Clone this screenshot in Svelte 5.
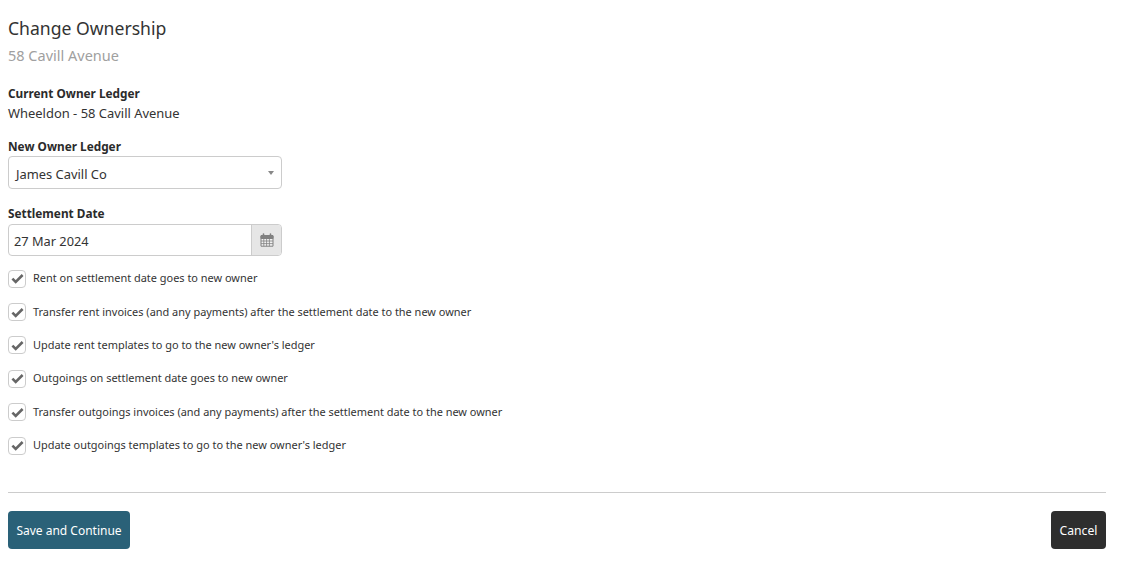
<script>
  const checks = [
    'Rent on settlement date goes to new owner',
    'Transfer rent invoices (and any payments) after the settlement date to the new owner',
    "Update rent templates to go to the new owner's ledger",
    'Outgoings on settlement date goes to new owner',
    'Transfer outgoings invoices (and any payments) after the settlement date to the new owner',
    "Update outgoings templates to go to the new owner's ledger"
  ];
</script>

<main class="page">
  <h1>Change Ownership</h1>
  <h2>58 Cavill Avenue</h2>

  <section class="info">
    <div class="label">Current Owner Ledger</div>
    <div class="value">Wheeldon - 58 Cavill Avenue</div>
  </section>

  <section class="newowner">
    <div class="label">New Owner Ledger</div>
    <div class="select"><span>James Cavill Co</span><i class="caret"></i></div>
  </section>

  <section class="settle">
    <div class="label">Settlement Date</div>
    <div class="date">
      <span class="dateval">27 Mar 2024</span>
      <span class="addon">
        <svg width="14" height="14" viewBox="0 0 14 14" fill="none" stroke="#808080" stroke-width="1">
          <path d="M1 3h12v10.2H1z" fill="#f2f2f2"/>
          <path d="M1 2.5h12v3H1z" fill="#808080"/>
          <path d="M1 8h12M1 10.6h12M3.8 5.5v7.7M6.6 5.5v7.7M9.4 5.5v7.7" stroke-width=".8"/>
          <path d="M3.5 1v2.6M10.5 1v2.6" stroke-width="1.6" stroke-linecap="round"/>
        </svg>
      </span>
    </div>
  </section>

  <section class="checks">
    {#each checks as c}
      <div class="check">
        <span class="box">
          <svg width="13" height="11" viewBox="0 0 13 11"><path d="M1.4 5.6l3.3 3.3 6.9-6.9" fill="none" stroke="#666" stroke-width="2.6"/></svg>
        </span>
        <span class="ctext">{c}</span>
      </div>
    {/each}
  </section>

  <hr />

  <footer>
    <button class="save">Save and Continue</button>
    <button class="cancel">Cancel</button>
  </footer>
</main>

<style>
  :global(body) { margin: 0; background: #fff; }
  .page {
    padding: 0 20px 0 8px;
    font-family: "Noto Sans", "Open Sans", sans-serif;
    color: #2b2b2b;
    font-size: 13px;
  }
  h1 { margin: 0; padding-top: 15px; font-size: 17.6px; line-height: 27px; font-weight: 400; color: #333; }
  h2 { margin: 0; font-size: 14.5px; line-height: 27px; font-weight: 400; color: #a0a0a0; }
  .label { font-weight: 700; font-size: 11.8px; line-height: 18px; padding: 1px 0; color: #2b2b2b; }
  .value { font-size: 12.95px; line-height: 20px; color: #333; }
  .info { margin-top: 14px; }
  .newowner { margin-top: 13px; }
  .select {
    width: 274px; height: 33px; box-sizing: border-box;
    border: 1px solid #ccc; border-radius: 4px;
    padding: 2px 7px 0; display: flex; align-items: center; justify-content: space-between;
    font-size: 12.9px; color: #333;
  }
  .caret { border: 3px solid transparent; border-top-color: #888; border-top-width: 4px; border-bottom: 0; margin: -2px 0 0; }
  .settle { margin-top: 14px; }
  .date {
    width: 274px; height: 32px; box-sizing: border-box;
    border: 1px solid #ccc; border-radius: 4px; display: flex; align-items: stretch;
    overflow: hidden; margin-top: 1px;
  }
  .dateval { flex: 1; padding: 2px 0 0 5px; display: flex; align-items: center; font-size: 12.8px; color: #333; }
  .addon {
    width: 30px; box-sizing: border-box; background: #e6e6e6; border-left: 1px solid #ccc;
    display: flex; align-items: center; justify-content: center;
  }
  .checks { margin-top: 13.7px; display: flex; flex-direction: column; gap: 15.4px; }
  .check { display: flex; align-items: flex-start; height: 18px; }
  .box {
    width: 18px; height: 18px; box-sizing: border-box; border: 1px solid #ccc; border-radius: 4px;
    display: flex; align-items: center; justify-content: center; flex: none;
  }
  .ctext { margin: -0.5px 0 0 7px; font-size: 10.95px; line-height: 18px; color: #333; }
  hr { border: 0; border-top: 1px solid #ccc; margin: 37.1px 0 18px; }
  footer { display: flex; justify-content: space-between; }
  button {
    height: 38px; border: 0; border-radius: 4px; color: #fff;
    font-family: inherit; font-size: 12px; padding: 2px 0 0;
  }
  .save { background: #2a6178; width: 122px; }
  .cancel { background: #2e2e2e; width: 55px; font-size: 12.2px; }
</style>
